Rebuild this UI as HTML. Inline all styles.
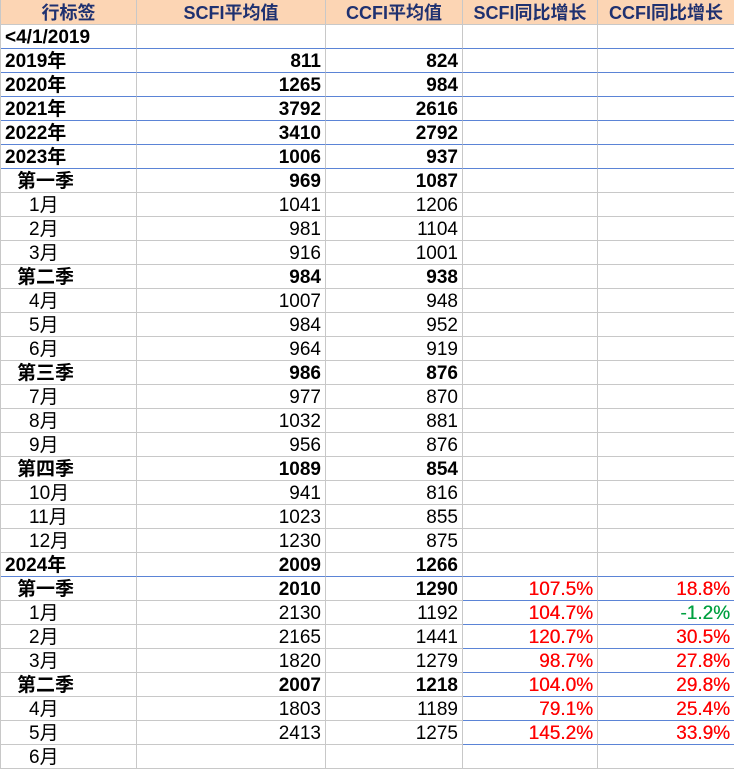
<!DOCTYPE html>
<html><head><meta charset="utf-8"><style>
body{margin:0;background:#fff;width:734px;height:769px;overflow:hidden}
table{border-collapse:separate;border-spacing:0;table-layout:fixed;width:735px;font-family:"Liberation Sans","Noto Sans CJK SC",sans-serif;font-size:19px;color:#000;border-left:1px solid #c8c8c8}
td{height:21px;padding:2px 4px 0 4px;border-right:1px solid #c8c8c8;border-bottom:1px solid #c8c8c8;white-space:nowrap;overflow:hidden;line-height:21px;vertical-align:top}
tr.h td{background:#fcd5b4;color:#1f3170;font-weight:bold;text-align:center;height:22px;font-size:18px;line-height:22px}
td.n{text-align:right}
tr.b td{font-weight:bold}
tr.y td{border-bottom:1px solid #5b84d6}
tr.q td:first-child{padding-left:16px}
tr.m td:first-child{padding-left:28px}
td.r{color:#ff0000;text-align:right;border-bottom:1px solid #5b84d6 !important;font-weight:normal !important;text-shadow:0.3px 0 0 #ff0000}
td.g{color:#00a040;text-align:right;border-bottom:1px solid #5b84d6 !important;text-shadow:0.3px 0 0 #00a040}
</style></head><body>
<table>
<colgroup><col style="width:136px"><col style="width:189px"><col style="width:137px"><col style="width:135px"><col style="width:137px"></colgroup>
<tr class="h"><td>行标签</td><td>SCFI平均值</td><td>CCFI平均值</td><td>SCFI同比增长</td><td>CCFI同比增长</td></tr>
<tr class="y b"><td>&lt;4/1/2019</td><td></td><td></td><td></td><td></td></tr>
<tr class="y b"><td>2019年</td><td class="n">811</td><td class="n">824</td><td></td><td></td></tr>
<tr class="y b"><td>2020年</td><td class="n">1265</td><td class="n">984</td><td></td><td></td></tr>
<tr class="y b"><td>2021年</td><td class="n">3792</td><td class="n">2616</td><td></td><td></td></tr>
<tr class="y b"><td>2022年</td><td class="n">3410</td><td class="n">2792</td><td></td><td></td></tr>
<tr class="y b"><td>2023年</td><td class="n">1006</td><td class="n">937</td><td></td><td></td></tr>
<tr class="q b"><td>第一季</td><td class="n">969</td><td class="n">1087</td><td></td><td></td></tr>
<tr class="m"><td>1月</td><td class="n">1041</td><td class="n">1206</td><td></td><td></td></tr>
<tr class="m"><td>2月</td><td class="n">981</td><td class="n">1104</td><td></td><td></td></tr>
<tr class="m"><td>3月</td><td class="n">916</td><td class="n">1001</td><td></td><td></td></tr>
<tr class="q b"><td>第二季</td><td class="n">984</td><td class="n">938</td><td></td><td></td></tr>
<tr class="m"><td>4月</td><td class="n">1007</td><td class="n">948</td><td></td><td></td></tr>
<tr class="m"><td>5月</td><td class="n">984</td><td class="n">952</td><td></td><td></td></tr>
<tr class="m"><td>6月</td><td class="n">964</td><td class="n">919</td><td></td><td></td></tr>
<tr class="q b"><td>第三季</td><td class="n">986</td><td class="n">876</td><td></td><td></td></tr>
<tr class="m"><td>7月</td><td class="n">977</td><td class="n">870</td><td></td><td></td></tr>
<tr class="m"><td>8月</td><td class="n">1032</td><td class="n">881</td><td></td><td></td></tr>
<tr class="m"><td>9月</td><td class="n">956</td><td class="n">876</td><td></td><td></td></tr>
<tr class="q b"><td>第四季</td><td class="n">1089</td><td class="n">854</td><td></td><td></td></tr>
<tr class="m"><td>10月</td><td class="n">941</td><td class="n">816</td><td></td><td></td></tr>
<tr class="m"><td>11月</td><td class="n">1023</td><td class="n">855</td><td></td><td></td></tr>
<tr class="m"><td>12月</td><td class="n">1230</td><td class="n">875</td><td></td><td></td></tr>
<tr class="y b"><td>2024年</td><td class="n">2009</td><td class="n">1266</td><td></td><td></td></tr>
<tr class="q b"><td>第一季</td><td class="n">2010</td><td class="n">1290</td><td class="r">107.5%</td><td class="r">18.8%</td></tr>
<tr class="m"><td>1月</td><td class="n">2130</td><td class="n">1192</td><td class="r">104.7%</td><td class="g">-1.2%</td></tr>
<tr class="m"><td>2月</td><td class="n">2165</td><td class="n">1441</td><td class="r">120.7%</td><td class="r">30.5%</td></tr>
<tr class="m"><td>3月</td><td class="n">1820</td><td class="n">1279</td><td class="r">98.7%</td><td class="r">27.8%</td></tr>
<tr class="q b"><td>第二季</td><td class="n">2007</td><td class="n">1218</td><td class="r">104.0%</td><td class="r">29.8%</td></tr>
<tr class="m"><td>4月</td><td class="n">1803</td><td class="n">1189</td><td class="r">79.1%</td><td class="r">25.4%</td></tr>
<tr class="m"><td>5月</td><td class="n">2413</td><td class="n">1275</td><td class="r">145.2%</td><td class="r">33.9%</td></tr>
<tr class="m"><td>6月</td><td></td><td></td><td></td><td></td></tr>
</table>
</body></html>
